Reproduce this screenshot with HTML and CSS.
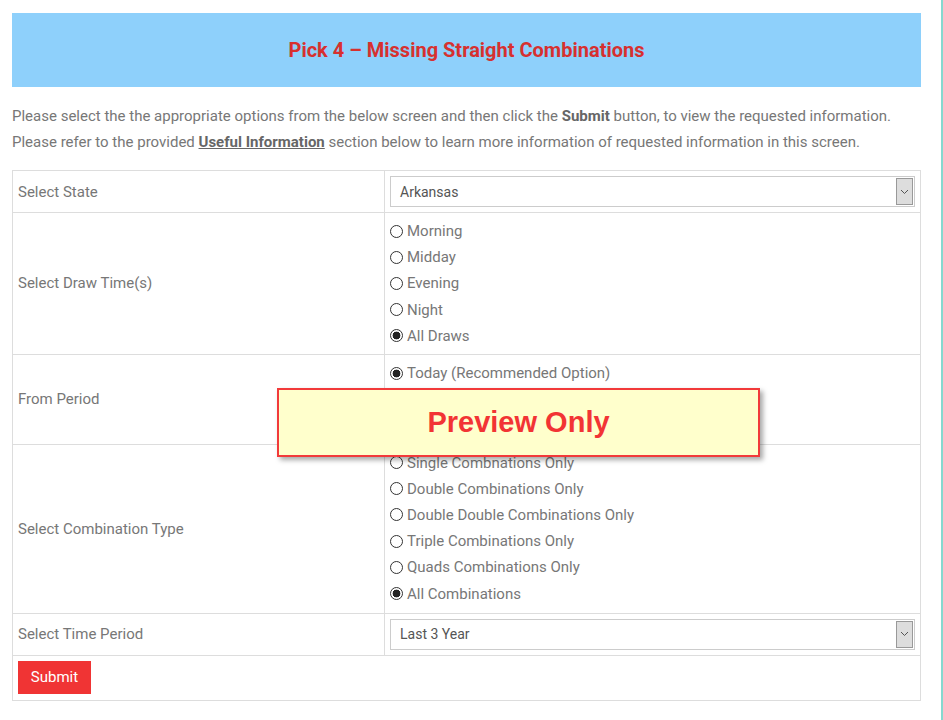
FILE: index.html
```html
<!DOCTYPE html>
<html>
<head>
<meta charset="utf-8">
<title>Pick 4 – Missing Straight Combinations</title>
<link rel="stylesheet" href="styles.css">
</head>
<body>
<div class="page">
  <div class="content">
    <div class="banner"><h1>Pick 4 – Missing Straight Combinations</h1></div>
    <p class="intro">Please select the the appropriate options from the below screen and then click the <b>Submit</b> button, to view the requested information.<br>Please refer to the provided <a href="#" class="link">Useful Information</a> section below to learn more information of requested information in this screen.</p>
    <div class="form-wrap">
      <table class="form">
        <tr>
          <td class="lbl">Select State</td>
          <td class="fld">
            <div class="sel"><span class="sel-text">Arkansas</span><span class="sel-btn"><svg width="9" height="6" viewBox="0 0 9 6"><path d="M1 1 L4.5 4.5 L8 1" fill="none" stroke="#555" stroke-width="1"/></svg></span></div>
          </td>
        </tr>
        <tr>
          <td class="lbl">Select Draw Time(s)</td>
          <td class="fld opts">
            <label class="opt"><span class="rad"></span>Morning</label>
            <label class="opt"><span class="rad"></span>Midday</label>
            <label class="opt"><span class="rad"></span>Evening</label>
            <label class="opt"><span class="rad"></span>Night</label>
            <label class="opt"><span class="rad on"></span>All Draws</label>
          </td>
        </tr>
        <tr>
          <td class="lbl">From Period</td>
          <td class="fld opts">
            <label class="opt"><span class="rad on"></span>Today (Recommended Option)</label>
            <label class="opt"><span class="rad"></span>Yesterday</label>
            <label class="opt"><span class="rad"></span>Custom Date</label>
          </td>
        </tr>
        <tr>
          <td class="lbl">Select Combination Type</td>
          <td class="fld opts opts-long">
            <label class="opt"><span class="rad"></span>Single Combnations Only</label>
            <label class="opt"><span class="rad"></span>Double Combinations Only</label>
            <label class="opt"><span class="rad"></span>Double Double Combinations Only</label>
            <label class="opt"><span class="rad"></span>Triple Combinations Only</label>
            <label class="opt"><span class="rad"></span>Quads Combinations Only</label>
            <label class="opt"><span class="rad on"></span>All Combinations</label>
          </td>
        </tr>
        <tr>
          <td class="lbl">Select Time Period</td>
          <td class="fld">
            <div class="sel"><span class="sel-text">Last 3 Year</span><span class="sel-btn"><svg width="9" height="6" viewBox="0 0 9 6"><path d="M1 1 L4.5 4.5 L8 1" fill="none" stroke="#555" stroke-width="1"/></svg></span></div>
          </td>
        </tr>
        <tr>
          <td class="fld btn-cell" colspan="2"><button class="submit" type="button">Submit</button></td>
        </tr>
      </table>
      <div class="preview">Preview Only</div>
    </div>
  </div>
</div>
</body>
</html>
```

FILE: styles.css
```css
html, body {
  margin: 0;
  padding: 0;
  background: #fff;
}
body {
  font-family: Roboto, "Liberation Sans", sans-serif;
  color: #777;
}
.page {
  width: 943px;
  min-height: 720px;
  box-sizing: border-box;
  border-right: 2px solid #86d8cf;
}
.content {
  width: 909px;
  padding: 13px 0 0 12px;
}
.banner {
  background: #8ed0fb;
  height: 74px;
  display: flex;
  align-items: center;
  justify-content: center;
}
.banner h1 {
  margin: 0;
  font-size: 20px;
  font-weight: 700;
  color: #d7302f;
}
.intro {
  margin: 16px 0 15px;
  font-size: 15px;
  line-height: 26px;
  color: #777;
}
.intro b {
  color: #666;
}
.link {
  color: #666;
  font-weight: 700;
  text-decoration: underline;
}
.form-wrap {
  position: relative;
}
.form {
  width: 909px;
  border-collapse: collapse;
  font-size: 15px;
}
.form td {
  border: 1px solid #ddd;
  padding: 5px;
}
.lbl {
  width: 361px;
  vertical-align: middle;
  color: #777;
}
.fld {
  vertical-align: top;
}
.form td.opts-long {
  padding-bottom: 6px;
}
.form td.btn-cell {
  padding-bottom: 6px;
}
.opt {
  display: flex;
  align-items: center;
  height: 26.2px;
  color: #777;
}
.rad {
  width: 13px;
  height: 13px;
  box-sizing: border-box;
  border: 1px solid #333;
  border-radius: 50%;
  margin-right: 4px;
  background: #fff;
  flex: none;
}
.rad.on {
  background: radial-gradient(circle, #222 0, #222 3.6px, #fff 4.2px);
}
.sel {
  height: 31px;
  box-sizing: border-box;
  border: 1px solid #ccc;
  display: flex;
  align-items: center;
  justify-content: space-between;
  padding: 0 1px 0 9px;
  font-size: 14px;
  color: #555;
  background: #fff;
}
.sel-btn {
  width: 17px;
  height: 27px;
  box-sizing: border-box;
  border: 1px solid #999;
  background: #ddd;
  display: flex;
  align-items: center;
  justify-content: center;
}
.submit {
  display: block;
  width: 73px;
  height: 33px;
  border: 0;
  background: #f03434;
  color: #fff;
  font-family: Roboto, "Liberation Sans", sans-serif;
  font-size: 15px;
  padding: 0;
}
.preview {
  position: absolute;
  left: 265px;
  top: 218px;
  width: 483px;
  height: 69px;
  box-sizing: border-box;
  border: 2px solid #f23a3a;
  background: #ffffcc;
  box-shadow: 3px 3px 5px rgba(0, 0, 0, 0.35);
  display: flex;
  align-items: center;
  justify-content: center;
  color: #f23434;
  font-family: "Liberation Sans", Arial, sans-serif;
  font-size: 29px;
  font-weight: 700;
}
```
